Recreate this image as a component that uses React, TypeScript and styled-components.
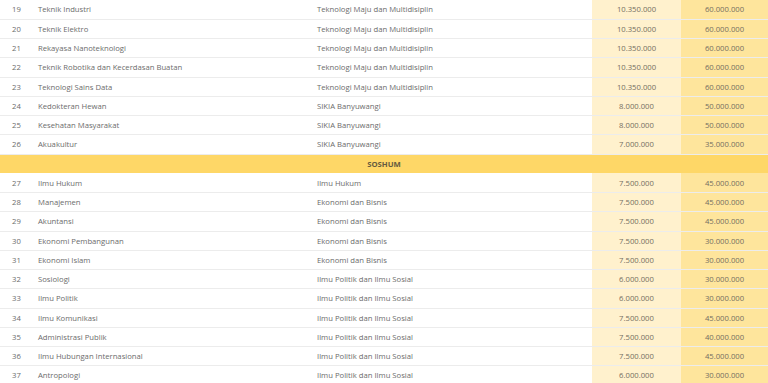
import styled, {createGlobalStyle} from "styled-components";

const GlobalStyle = createGlobalStyle`
    html, body {
        margin: 0;
        padding: 0;
        background: #ffffff;
        overflow: hidden;
    }
`

const TableStyle = styled.table`
    width: 768px;
    border-collapse: collapse;
    table-layout: fixed;
    font-family: "Open Sans", "Noto Sans", sans-serif;
    font-size: 7.7px;
    color: #6c6c6c;
`

const ColStyle = styled.col<{$w: number}>`
    width: ${(props) => props.$w}px;
`

const RowStyle = styled.tr`
    height: 19.26px;
    border-bottom: 1px solid #ececec;
`

const CellStyle = styled.td<{$tone?: "light" | "dark"}>`
    padding: 0 0 0 ${(props) => props.$tone ? "0" : "12px"};
    white-space: nowrap;
    vertical-align: middle;
    text-align: ${(props) => props.$tone ? "center" : "left"};
    background-color: ${(props) =>
        props.$tone === "light" ? "#fff1cd" : props.$tone === "dark" ? "#fee59c" : "transparent"};
    color: ${(props) => props.$tone ? "#746e62" : "#6c6c6c"};
`

const GroupRowStyle = styled.tr`
    height: 19.26px;
    background-color: #fed767;
`

const GroupCellStyle = styled.td`
    text-align: center;
    font-weight: 700;
    color: #655b40;
`

type Prodi = [number, string, string, string, string];

const rowsTop: Prodi[] = [
    [19, "Teknik Industri", "Teknologi Maju dan Multidisiplin", "10.350.000", "60.000.000"],
    [20, "Teknik Elektro", "Teknologi Maju dan Multidisiplin", "10.350.000", "60.000.000"],
    [21, "Rekayasa Nanoteknologi", "Teknologi Maju dan Multidisiplin", "10.350.000", "60.000.000"],
    [22, "Teknik Robotika dan Kecerdasan Buatan", "Teknologi Maju dan Multidisiplin", "10.350.000", "60.000.000"],
    [23, "Teknologi Sains Data", "Teknologi Maju dan Multidisiplin", "10.350.000", "60.000.000"],
    [24, "Kedokteran Hewan", "SIKIA Banyuwangi", "8.000.000", "50.000.000"],
    [25, "Kesehatan Masyarakat", "SIKIA Banyuwangi", "8.000.000", "50.000.000"],
    [26, "Akuakultur", "SIKIA Banyuwangi", "7.000.000", "35.000.000"],
];

const rowsSoshum: Prodi[] = [
    [27, "Ilmu Hukum", "Ilmu Hukum", "7.500.000", "45.000.000"],
    [28, "Manajemen", "Ekonomi dan Bisnis", "7.500.000", "45.000.000"],
    [29, "Akuntansi", "Ekonomi dan Bisnis", "7.500.000", "45.000.000"],
    [30, "Ekonomi Pembangunan", "Ekonomi dan Bisnis", "7.500.000", "30.000.000"],
    [31, "Ekonomi Islam", "Ekonomi dan Bisnis", "7.500.000", "30.000.000"],
    [32, "Sosiologi", "Ilmu Politik dan Ilmu Sosial", "6.000.000", "30.000.000"],
    [33, "Ilmu Politik", "Ilmu Politik dan Ilmu Sosial", "6.000.000", "30.000.000"],
    [34, "Ilmu Komunikasi", "Ilmu Politik dan Ilmu Sosial", "7.500.000", "45.000.000"],
    [35, "Administrasi Publik", "Ilmu Politik dan Ilmu Sosial", "7.500.000", "40.000.000"],
    [36, "Ilmu Hubungan Internasional", "Ilmu Politik dan Ilmu Sosial", "7.500.000", "45.000.000"],
    [37, "Antropologi", "Ilmu Politik dan Ilmu Sosial", "6.000.000", "30.000.000"],
];

function ProdiRow({row}: {row: Prodi}) {
    const [no, name, faculty, ukt, ipi] = row;
    return (
        <RowStyle>
            <CellStyle>{no}</CellStyle>
            <CellStyle>{name}</CellStyle>
            <CellStyle>{faculty}</CellStyle>
            <CellStyle $tone="light">{ukt}</CellStyle>
            <CellStyle $tone="dark">{ipi}</CellStyle>
        </RowStyle>
    );
}

export default function App() {
    return (
        <>
            <GlobalStyle/>
            <TableStyle>
                <colgroup>
                    <ColStyle $w={26}/>
                    <ColStyle $w={279}/>
                    <ColStyle $w={287}/>
                    <ColStyle $w={89}/>
                    <ColStyle $w={87}/>
                </colgroup>
                <tbody>
                    {rowsTop.map((row) => <ProdiRow key={row[0]} row={row}/>)}
                    <GroupRowStyle>
                        <GroupCellStyle colSpan={5}>SOSHUM</GroupCellStyle>
                    </GroupRowStyle>
                    {rowsSoshum.map((row) => <ProdiRow key={row[0]} row={row}/>)}
                </tbody>
            </TableStyle>
        </>
    );
}
